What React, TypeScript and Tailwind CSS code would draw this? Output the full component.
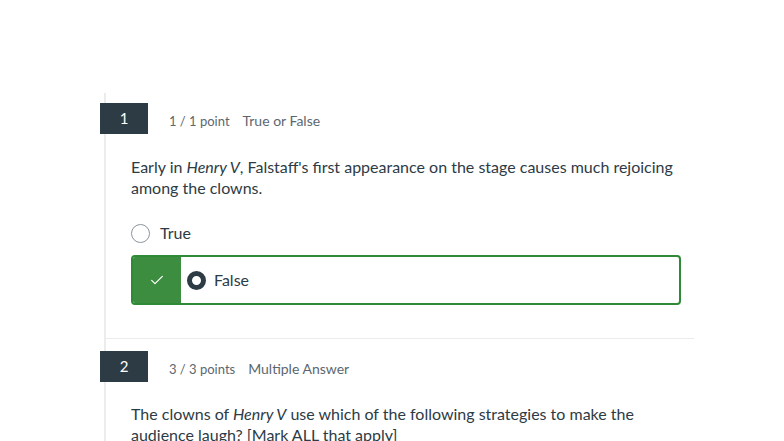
import React from 'react';

const font = { fontFamily: 'Lato, "Open Sans", sans-serif' };

function Badge({ n }: { n: number }) {
  return (
    <div className="-ml-[6px] flex h-[31px] w-[48px] items-center justify-center bg-[#2d3b45] text-[15px] text-white">
      {n}
    </div>
  );
}

function Header({ n, points, kind }: { n: number; points: string; kind: string }) {
  return (
    <div className="flex items-center">
      <Badge n={n} />
      <span className="ml-[21px] pt-[6px] text-[13px] text-[#5b6770]">{points}</span>
      <span className="ml-[13px] pt-[4px] text-[14px] text-[#5b6770]">{kind}</span>
    </div>
  );
}

export default function App() {
  return (
    <div className="min-h-[441px] w-[784px] overflow-hidden bg-white text-[#2d3b45]" style={font}>
      <div className="ml-[104px] mt-[93px] w-[590px] border-l-2 border-[#ececec]">
        {/* Question 1 */}
        <div className="border-b border-[#ececec] pb-[33px] pt-[10px]">
          <Header n={1} points="1 / 1 point" kind="True or False" />
          <p className="mt-[22px] pl-[25px] pr-[10px] text-[16px] leading-[21px]">
            Early in <em>Henry V</em>, Falstaff's first appearance on the stage causes much rejoicing among the clowns.
          </p>
          <div className="mt-[23px] flex items-center pl-[25px]">
            <span className="h-[19px] w-[19px] rounded-full border border-[#8b959c] bg-white" />
            <span className="ml-[10px] text-[16px]">True</span>
          </div>
          <div className="ml-[25px] mt-[10px] flex h-[50px] w-[550px] overflow-hidden rounded-[4px] border-2 border-[#2f8a36]">
            <div className="flex w-[48px] items-center justify-center bg-[#3c8d40]">
              <svg width="16" height="16" viewBox="0 0 24 24" fill="none" stroke="white" strokeWidth="1.8" strokeLinecap="round" strokeLinejoin="round">
                <path d="M4 12.5l5 5L20 6.5" />
              </svg>
            </div>
            <div className="flex items-center pl-[6px]">
              <span className="h-[19px] w-[19px] rounded-full border-[5px] border-[#2d3b45] bg-white" />
              <span className="ml-[8px] text-[16px]">False</span>
            </div>
          </div>
        </div>

        {/* Question 2 */}
        <div className="pt-[12px]">
          <Header n={2} points="3 / 3 points" kind="Multiple Answer" />
          <p className="mt-[21px] pl-[25px] pr-[10px] text-[16px] leading-[21px]">
            The clowns of <em>Henry V</em> use which of the following strategies to make the audience laugh? [Mark ALL that apply]
          </p>
        </div>
      </div>
    </div>
  );
}
